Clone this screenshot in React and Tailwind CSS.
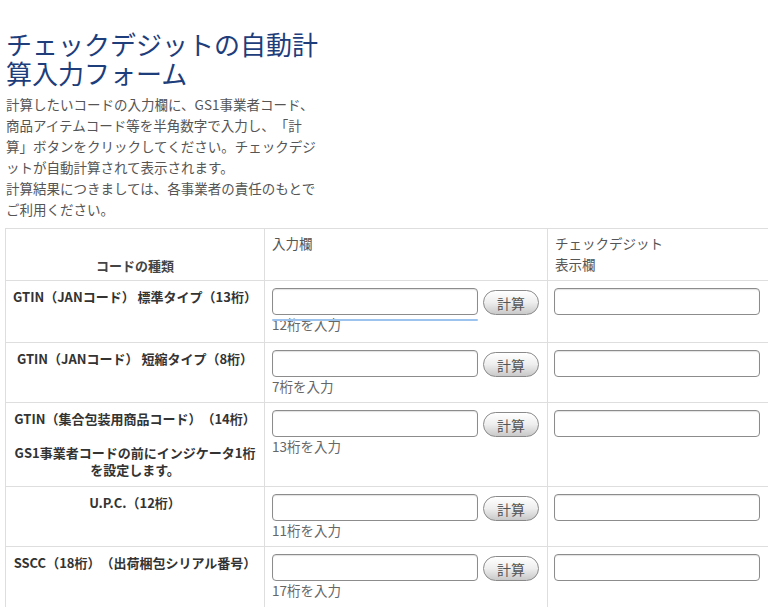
import React from 'react';

const rows = [
  { label: ['GTIN（JANコード） 標準タイプ（13桁）'], hint: '12桁を入力', h: 'h-[62px]', focus: true },
  { label: ['GTIN（JANコード） 短縮タイプ（8桁）'], hint: '7桁を入力', h: 'h-[60px]' },
  {
    label: ['GTIN（集合包装用商品コード）（14桁）', '', 'GS1事業者コードの前にインジケータ1桁を設定します。'],
    hint: '13桁を入力',
    h: 'h-[84px]',
  },
  { label: ['U.P.C.（12桁）'], hint: '11桁を入力', h: 'h-[60px]' },
  { label: ['SSCC（18桁）（出荷梱包シリアル番号）'], hint: '17桁を入力', h: 'h-[62px]' },
];

const CalcButton = () => (
  <button className="h-[25px] w-[56px] shrink-0 rounded-full border border-[#8a8a8a] bg-gradient-to-b from-[#ffffff] via-[#eeeeee] to-[#c9c9c9] text-[14px] leading-none text-[#555] shadow-[inset_0_1px_0_#fff]">
    計算
  </button>
);

const TextBox = () => (
  <input
    type="text"
    className="h-[27px] w-[206px] shrink-0 rounded-[4px] border border-[#8c8c8c] bg-white shadow-[inset_0_1px_1px_rgba(0,0,0,0.12)] outline-none"
  />
);

const App = () => {
  return (
    <div className="min-h-screen bg-white font-['Noto_Sans_CJK_JP','Noto_Sans',sans-serif] text-[#333] [text-spacing-trim:space-all]">
      {/* Heading and explanation */}
      <div className="w-[320px] pl-[6px] pt-[29px]">
        <h1 className="text-[26px] font-normal leading-[29px] text-[#1e3d7b]">
          チェックデジットの自動計算入力フォーム
        </h1>
        <p className="mt-[7px] text-[13.5px] leading-[21px] text-[#555]">
          計算したいコードの入力欄に、GS1事業者コード、
          <br />
          商品アイテムコード等を半角数字で入力し、「計
          <br />
          算」ボタンをクリックしてください。チェックデジ
          <br />
          ットが自動計算されて表示されます。
          <br />
          計算結果につきましては、各事業者の責任のもとで
          <br />
          ご利用ください。
        </p>
      </div>

      {/* Calculation table */}
      <table className="ml-[5px] mt-[8px] w-[763px] table-fixed border-collapse">
        <colgroup>
          <col className="w-[259px]" />
          <col className="w-[283px]" />
          <col className="w-[221px]" />
        </colgroup>
        <thead>
          <tr className="h-[52px]">
            <th className="border border-[#dedede] px-[7px] pb-[6px] align-bottom text-[13px] font-bold leading-[17px] text-[#444]">
              コードの種類
            </th>
            <th className="border border-[#dedede] px-[7px] pt-[4px] text-left align-top text-[13.5px] font-normal leading-[21px] text-[#555]">
              入力欄
            </th>
            <th className="border border-[#dedede] px-[7px] pt-[4px] text-left align-top text-[13.5px] font-normal leading-[21px] text-[#555]">
              チェックデジット
              <br />
              表示欄
            </th>
          </tr>
        </thead>
        <tbody>
          {rows.map((row, i) => (
            <tr key={i} className={row.h}>
              <td className="border border-[#dedede] px-[7px] pt-[7px] align-top text-center text-[13px] font-bold leading-[17px] text-[#333]">
                {row.label.map((line, j) => (
                  <div key={j} className="min-h-[17px]">
                    {line}
                  </div>
                ))}
              </td>
              <td className="border border-[#dedede] px-[7px] pt-[7px] align-top">
                <div className="relative flex items-end gap-[5px]">
                  <TextBox />
                  <CalcButton />
                  {row.focus && (
                    <div className="absolute left-0 top-[31px] h-[2px] w-[206px] rounded-full bg-[#9cc3ee]" />
                  )}
                </div>
                <div className="text-[13.5px] leading-[18px] text-[#666]">{row.hint}</div>
              </td>
              <td className="border border-[#dedede] px-[6px] pt-[7px] align-top">
                <TextBox />
              </td>
            </tr>
          ))}
        </tbody>
      </table>
    </div>
  );
};

export default App;
